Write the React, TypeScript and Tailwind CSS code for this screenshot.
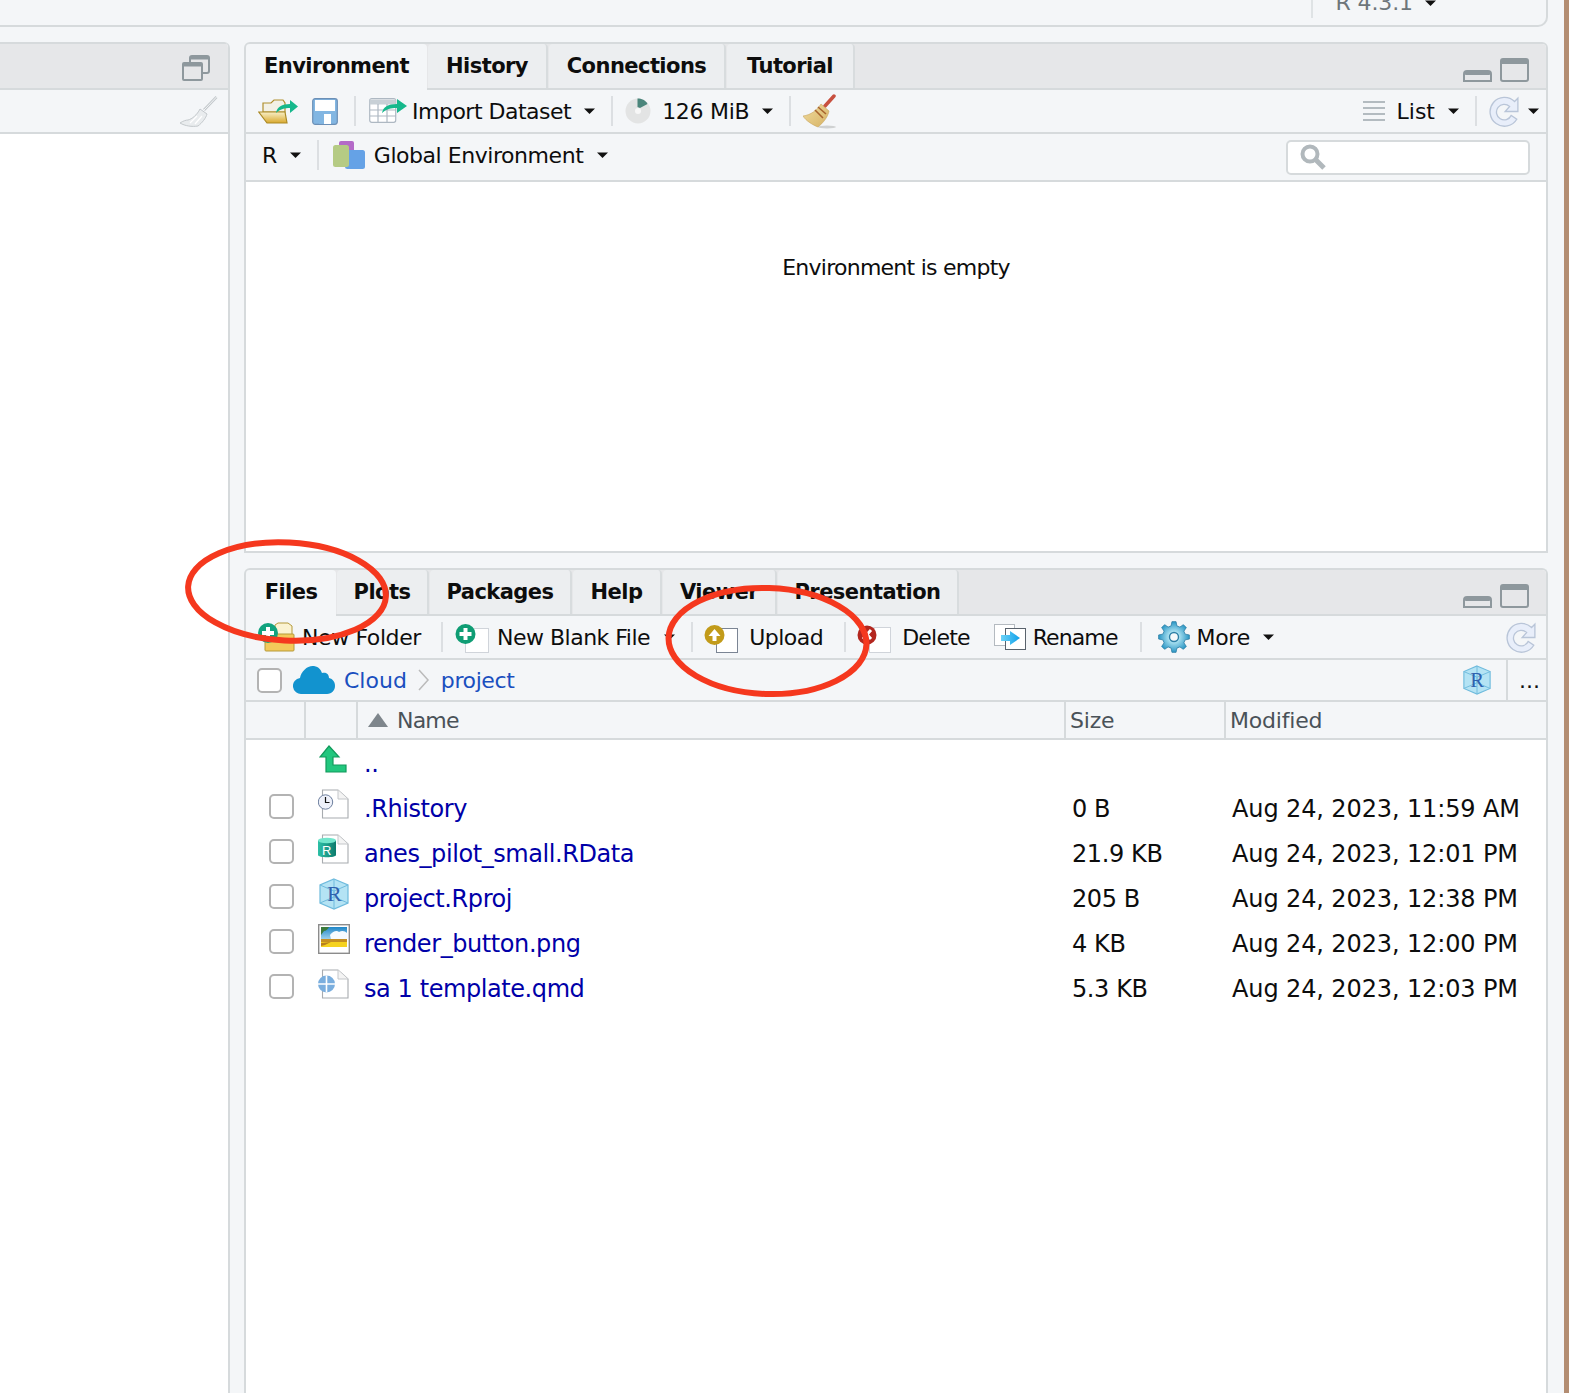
import React from "react";

const Caret = ({ ml = 0 }: { ml?: number }) => (
  <svg width="11" height="6" viewBox="0 0 11 6" className="shrink-0" style={{ marginLeft: ml }}>
    <path d="M0 0.500H11L5.500 6Z" fill="#111" />
  </svg>
);
const Sep = ({ ml, mr }: { ml: number; mr: number }) => (
  <div className="w-[2px] h-[30px] bg-[#dcdfe2] shrink-0" style={{ marginLeft: ml, marginRight: mr }} />
);

const MinIcon = () => (
  <svg width="29" height="12" viewBox="0 0 29 12"><path d="M1 11V4a3 3 0 0 1 3-3h21a3 3 0 0 1 3 3v7" fill="none" stroke="#8e989d" strokeWidth="2"/><rect x="1" y="1" width="27" height="4" rx="2" fill="#8e989d"/><path d="M0 11H29" stroke="#8e989d" strokeWidth="2"/></svg>
);
const MaxIcon = () => (
  <svg width="29" height="24" viewBox="0 0 29 24"><rect x="1" y="1" width="27" height="22" rx="2" fill="none" stroke="#8e989d" strokeWidth="2"/><rect x="1" y="1" width="27" height="5" fill="#8e989d"/></svg>
);
const WinButtons = () => (
  <div className="ml-auto flex items-end gap-[8px] pr-[17px] pb-[6px]"><MinIcon /><MaxIcon /></div>
);

const Folder = () => (
  <svg width="40" height="28" viewBox="0 0 40 28" className="shrink-0">
    <defs><linearGradient id="fo" x1="0" y1="0" x2="0" y2="1"><stop offset="0" stopColor="#f8efc8"/><stop offset="1" stopColor="#d9a92e"/></linearGradient></defs>
    <path d="M5 15V6h8l3-3h9l2 3v9z" fill="#f3f1e6" stroke="#b08f2e" strokeWidth="1.200"/>
    <path d="M0.800 15H27l2 11H9z" fill="url(#fo)" stroke="#ab8a26" strokeWidth="1.200"/>
    <path d="M18 16c1-6 6-9 14-9V3l8 6.500L32 16v-5c-5 0-10 1-14 5z" fill="#16b88c"/>
  </svg>
);
const Save = () => (
  <svg width="26" height="27" viewBox="0 0 26 27" className="shrink-0"><rect x=".7" y=".7" width="24.600" height="25.600" rx="2.500" fill="#82b6e2" stroke="#6b8fb6" strokeWidth="1.200"/><rect x="3" y="2" width="20" height="11" fill="#fff"/><rect x="7" y="16" width="12" height="10" fill="#fff"/><rect x="7" y="16" width="5" height="10" fill="#82b6e2"/></svg>
);
const TableImp = () => (
  <svg width="38" height="26" viewBox="0 0 38 26" className="shrink-0"><rect x=".7" y=".7" width="26" height="23.600" rx="2" fill="#fff" stroke="#aeb8c2" strokeWidth="1.200"/><path d="M.7 1.500h26v5H.7z" fill="#c8d0d6"/><path d="M1 12h26M1 18h26M9 6v18M18 6v18" stroke="#aeb8c2" strokeWidth="1.200"/><path d="M13 15c1-6 6-9 15-9V1l10 7-10 7v-5c-6 0-11 1-15 5z" fill="#16b88c"/></svg>
);
const Pie = () => (
  <svg width="26" height="26" viewBox="0 0 26 26" className="shrink-0"><circle cx="13" cy="13" r="12.500" fill="#e3e4e4"/><path d="M12.500 9V.500c4 0 8 1.500 10 5.500l-7.500 4z" fill="#4b857b"/><circle cx="13" cy="13" r="3" fill="#f7f7f7"/></svg>
);
const Broom = () => (
  <svg width="34" height="35" viewBox="0 0 34 35" className="shrink-0">
    <defs><linearGradient id="br" x1="0" y1="0" x2="1" y2="1"><stop offset="0" stopColor="#f0dca0"/><stop offset="1" stopColor="#d6b263"/></linearGradient></defs>
    <ellipse cx="24" cy="33" rx="9" ry="1.500" fill="#cfd1d2"/>
    <path d="M31 2l-9 10" stroke="#c8503f" strokeWidth="3.500" strokeLinecap="round"/>
    <path d="M18 10l8 7c-1 6-6 12-11 16C10 31 3 27 0 22c8-1 14-6 18-12z" fill="url(#br)" stroke="#c9a660" strokeWidth=".6"/>
    <path d="M15 13l8 7M12 16l8 8" stroke="#a8642e" strokeWidth="1.600"/>
  </svg>
);
const DimBroom = () => (
  <svg width="38" height="31" viewBox="0 0 38 31" className="shrink-0">
    <path d="M36.500 1L24 14" stroke="#c3c8cb" strokeWidth="2.600"/>
    <path d="M36.500 1L24 14" stroke="#f4f6f8" strokeWidth="1"/>
    <path d="M20 13l7 5c-1 4-5 9-9 12-6 1-13 0-18-3 3-2 6-3 8-3 4-1 9-5 12-11z" fill="#e9ecee" stroke="#c3c8cb" strokeWidth="1"/>
    <path d="M10 27l7-7M15 28l7-8" stroke="#fff" strokeWidth="1.200"/>
  </svg>
);
const Lines = () => (
  <svg width="24" height="20" viewBox="0 0 24 20" stroke="#b3bbc0" strokeWidth="2" className="shrink-0"><path d="M1 1h22M1 7h22M1 13h22M1 19h22"/></svg>
);
const Refresh = () => (
  <svg width="31" height="31" viewBox="0 1 28 28" className="shrink-0"><path d="M26 22a13 13 0 1 1-2-16l3-3v12H15.500l4-4.500a7 7 0 1 0 1.500 8z" fill="#e8eefa" stroke="#b9c5d8" strokeWidth="1.200"/></svg>
);
const GlobalEnv = () => (
  <svg width="32" height="28" viewBox="0 0 32 28" className="shrink-0"><rect x="6" y="0" width="15" height="19" rx="2" fill="#b46ac8"/><rect x="12" y="9" width="20" height="19" rx="2.500" fill="#65a2e6"/><rect x="0" y="4" width="16" height="22" rx="2.500" fill="#b5cb84"/></svg>
);
const Search = () => (
  <svg width="27" height="27" viewBox="0 0 27 27" fill="none" stroke="#b1b8bc" className="shrink-0"><circle cx="10" cy="10" r="7.500" strokeWidth="4"/><path d="M15 15l9 9" strokeWidth="5"/></svg>
);
const NewFolder = () => (
  <svg width="38" height="30" viewBox="0 0 38 30" className="shrink-0"><path d="M17 10V3l3-2h10l4 3v24H17z" fill="#fbf3d2" stroke="#b59a3a"/><rect x="7" y="12" width="29" height="17" rx="1" fill="#f3c95a" stroke="#b59a3a"/><circle cx="10" cy="11" r="10" fill="#11a37f"/><path d="M10 5v12M4 11h12" stroke="#fff" strokeWidth="4"/></svg>
);
const NewFile = () => (
  <svg width="36" height="32" viewBox="0 0 36 32" className="shrink-0"><rect x="10.500" y="7.500" width="23" height="24" fill="#fff" stroke="#d0d4da"/><circle cx="10.500" cy="13" r="10" fill="#0f9d74"/><path d="M10.500 7v12M4.500 13h12" stroke="#fff" strokeWidth="4"/></svg>
);
const UploadI = () => (
  <svg width="36" height="32" viewBox="0 0 36 32" className="shrink-0"><rect x="12.500" y="7.500" width="21" height="24" fill="#fff" stroke="#7b8594"/><circle cx="10.500" cy="14" r="10" fill="#c29b1a"/><path d="M10.500 8l6 7h-4v5h-4v-5h-4z" fill="#fff"/></svg>
);
const DeleteI = () => (
  <svg width="36" height="32" viewBox="0 0 36 32" className="shrink-0"><rect x="12.500" y="6.500" width="21" height="25" fill="#fff" stroke="#d0d4da"/><circle cx="10" cy="14" r="9.500" fill="#b3261e"/><path d="M6 9l8 9M14 9l-8 9" stroke="#fff" strokeWidth="3"/></svg>
);
const RenameI = () => (
  <svg width="34" height="28" viewBox="0 0 34 28" className="shrink-0">
    <defs><linearGradient id="rn" x1="0" y1="0" x2="1" y2="0"><stop offset="0" stopColor="#6ed3f7"/><stop offset="1" stopColor="#0ea0ea"/></linearGradient></defs>
    <rect x=".5" y="1.500" width="20" height="21" fill="#fff" stroke="#b4bac0"/><rect x="11.500" y="5.500" width="20" height="21" fill="#fff" stroke="#59626c"/><path d="M7 12h9V8l10 7-10 7v-4H7z" fill="url(#rn)"/>
  </svg>
);
const gearPath = (() => {
  const n = 8, cx = 16, cy = 16, ro = 15.5, ri = 11.5;
  let d = "";
  for (let i = 0; i < n; i++) {
    const a = (i / n) * Math.PI * 2;
    const s = (Math.PI * 2) / n;
    const pts: [number, number][] = [
      [ri, a - s * 0.32],
      [ro, a - s * 0.17],
      [ro, a + s * 0.17],
      [ri, a + s * 0.32],
    ];
    pts.forEach(([r, t], j) => {
      d += `${i === 0 && j === 0 ? "M" : "L"}${(cx + r * Math.cos(t)).toFixed(2)} ${(cy + r * Math.sin(t)).toFixed(2)}`;
    });
  }
  return d + "Z";
})();
const Gear = () => (
  <svg width="32" height="32" viewBox="0 0 32 32" className="shrink-0"><defs><radialGradient id="g1"><stop offset="0.2" stopColor="#c4f0fa"/><stop offset="1" stopColor="#2a96c4"/></radialGradient></defs><path d={gearPath} fill="url(#g1)" stroke="#2d7fa6" strokeWidth=".8"/><circle cx="16" cy="16" r="4.500" fill="#f4f8fa" stroke="#2d7fa6" strokeWidth="1.400"/></svg>
);
const Cloud = () => (
  <svg width="42" height="30" viewBox="0 0 42 30" className="shrink-0"><path d="M9 29a8 8 0 0 1-2-16c1-7 8-13 14-12 5 1 7 4 8 7 3-1 7 0 7 5 4 1 6 4 6 8s-3 8-8 8z" fill="#1293cf"/></svg>
);
const RProj = ({ w = 32 }: { w?: number }) => (
  <svg width={w} height={w} viewBox="0 0 32 32" className="shrink-0"><path d="M16 1l14 6v18l-14 6-14-6V7z" fill="#b4e3f4" stroke="#6fbbdd" strokeWidth="1.200"/><path d="M2 7l14 6 14-6M16 13v18M2 25l14-6 14 6M16 1v18" fill="none" stroke="#6fbbdd" strokeWidth="1"/><text x="16" y="23" textAnchor="middle" fontFamily="'Liberation Serif',serif" fontSize="22" fill="#2f62ae">R</text></svg>
);
const UpArrow = () => (
  <svg width="28" height="28" viewBox="0 0 28 28" className="ml-[1px]"><path d="M10 1l10 11h-6v8h13v7H7V12H1z" fill="#22c77e" stroke="#129a5c" strokeWidth="1.200"/></svg>
);
const FileBase = ({ children }: { children?: React.ReactNode }) => (
  <svg width="32" height="30" viewBox="0 0 32 30"><path d="M4.500 1h15.500l10 9v19H4.500z" fill="#fff" stroke="#a8acb0" strokeWidth="1.100"/><path d="M20 1v9h10" fill="#f4f4f4" stroke="#c4c7ca"/>{children}</svg>
);
const Clock = () => <FileBase><circle cx="7.500" cy="13" r="7.200" fill="#eef1fa" stroke="#6d7f9e"/><path d="M7.500 8v5.500h4" fill="none" stroke="#111" strokeWidth="1.200"/></FileBase>;
const RData = () => (
  <FileBase><defs><linearGradient id="rd" x1="0" y1="0" x2="1" y2="0"><stop offset="0" stopColor="#2cc0a6"/><stop offset="1" stopColor="#0c7a6c"/></linearGradient></defs><path d="M0 7c0-3 18-3 18 0v14c0 3-18 3-18 0z" fill="url(#rd)"/><ellipse cx="9" cy="6.500" rx="9" ry="2.700" fill="#72e6cc"/><text x="8.500" y="21" textAnchor="middle" fontFamily="'Liberation Sans',sans-serif" fontSize="13" fill="#fff">R</text></FileBase>
);
const Png = () => (
  <svg width="32" height="30" viewBox="0 0 32 30">
    <defs><linearGradient id="sk" x1="0" y1="0" x2="0" y2="1"><stop offset="0" stopColor="#1f86c8"/><stop offset="1" stopColor="#a6d6ee"/></linearGradient></defs>
    <rect x=".7" y=".7" width="30.600" height="28.600" fill="#fff" stroke="#8c8c8c" strokeWidth="1.400"/><rect x="3" y="3" width="26" height="13" fill="url(#sk)"/><path d="M12 11c3-4 7-5 9-3 3-2 6-1 8 1v6H13z" fill="#f6fbfe"/><path d="M3 3h8c-1 2-3 4-5 4l-3 4z" fill="#3b7a3c"/><rect x="3" y="15" width="26" height="4" fill="#c58f22"/><path d="M3 18h26v5H3z" fill="#f5d21f"/><path d="M3 19l10-1-6 3-4 1z" fill="#b8801c"/></svg>
);
const Qmd = () => (
  <FileBase><circle cx="8.500" cy="15" r="8.500" fill="#7aaede"/><path d="M8.500 6.500v17M0 15h17" stroke="#fff" strokeWidth="1.600"/></FileBase>
);

const Check = () => <div className="w-[25px] h-[25px] rounded-[5px] border-2 border-[#b3b3b3] bg-white shrink-0" />;

const Tab = ({ label, w, active }: { label: string; w: number; active?: boolean }) => (
  <div
    className={`flex items-center justify-center rounded-t-[4px] text-[21px] font-bold tracking-[-0.55px] text-[#0d0d0d] shrink-0 mr-[1px] ${active ? "h-[46px] -mb-[2px] bg-[#f4f6f8] relative z-10" : "h-[44px] pt-[1px] bg-[#eceef0] border-r-2 border-[#d8dcde]"}`}
    style={{ width: w }}
  >
    {label}
  </div>
);

const files = [
  { name: "..", up: true, icon: <UpArrow />, size: "", mod: "" },
  { name: ".Rhistory", icon: <Clock />, size: "0 B", mod: "Aug 24, 2023, 11:59 AM" },
  { name: "anes_pilot_small.RData", icon: <RData />, size: "21.9 KB", mod: "Aug 24, 2023, 12:01 PM" },
  { name: "project.Rproj", icon: <RProj />, size: "205 B", mod: "Aug 24, 2023, 12:38 PM" },
  { name: "render_button.png", icon: <Png />, size: "4 KB", mod: "Aug 24, 2023, 12:00 PM" },
  { name: "sa 1 template.qmd", icon: <Qmd />, size: "5.3 KB", mod: "Aug 24, 2023, 12:03 PM" },
];

export default function App() {
  return (
    <div className="relative w-[1569px] h-[1393px] overflow-hidden bg-[#f4f6f8] font-['DejaVu_Sans',sans-serif] text-[22px] tracking-[-0.5px] text-[#0d0d0d]">
      {/* top bar */}
      <div className="w-[1548px] h-[27px] border-b-2 border-r-2 border-[#d6dadc] rounded-br-[10px] flex items-start overflow-hidden">
        <div className="ml-auto flex items-center -mt-[14px] pr-[110px]">
          <div className="w-[2px] h-[30px] bg-[#dfe3e5] mr-[22px]" />
          <span className="text-[#6e767b] text-[22px] tracking-[-0.1px]">R 4.3.1</span>
          <Caret ml={12} />
        </div>
      </div>

      <div className="flex pt-[15px] h-[1366px]">
        {/* left pane */}
        <div className="w-[230px] shrink-0 h-full flex flex-col border-r-2 border-[#d6dadc] bg-white rounded-tr-[6px] overflow-hidden">
          <div className="h-[48px] bg-[#e6e7e9] border-t-2 border-b-2 border-[#d6dadc] flex items-center justify-end pr-[18px] pt-[4px] shrink-0">
            <svg width="28" height="26" viewBox="0 0 28 26" fill="none" stroke="#8e989d" strokeWidth="2"><path d="M8 8V3a2 2 0 0 1 2-2h15a2 2 0 0 1 2 2v13a2 2 0 0 1-2 2h-5"/><path d="M8 3h19" strokeWidth="3"/><rect x="1" y="8" width="19" height="17" rx="1"/><path d="M1 10h19" strokeWidth="3"/></svg>
          </div>
          <div className="h-[44px] bg-[#f4f6f8] border-b-2 border-[#d6dadc] flex items-center justify-end pr-[10px] shrink-0">
            <DimBroom />
          </div>
        </div>

        {/* right column */}
        <div className="ml-[14px] w-[1304px] shrink-0 flex flex-col">
          {/* environment */}
          <div className="h-[511px] shrink-0 flex flex-col border-2 border-[#d6dadc] rounded-t-[6px] bg-white overflow-hidden">
            <div className="h-[46px] shrink-0 bg-[#e6e7e9] flex items-end border-b-2 border-[#d6dadc]">
              <Tab label="Environment" w={181} active />
              <Tab label="History" w={120} />
              <Tab label="Connections" w={177} />
              <Tab label="Tutorial" w={128} />
              <WinButtons />
            </div>
            <div className="h-[44px] shrink-0 bg-[#f4f6f8] border-b-2 border-[#d6dadc] flex items-center pl-[12px]">
              <Folder />
              <div className="ml-[14px]"><Save /></div>
              <Sep ml={16} mr={13} />
              <TableImp />
              <span className="ml-[5px]">Import Dataset</span>
              <Caret ml={13} />
              <Sep ml={16} mr={12} />
              <Pie />
              <span className="ml-[11px] tracking-[-0.3px]">126 MiB</span>
              <Caret ml={13} />
              <Sep ml={16} mr={12} />
              <Broom />
              <div className="ml-auto flex items-center pr-[7px]">
                <Lines />
                <span className="ml-[11px] tracking-normal">List</span>
                <Caret ml={13} />
                <Sep ml={16} mr={11} />
                <Refresh />
                <Caret ml={9} />
              </div>
            </div>
            <div className="h-[48px] shrink-0 bg-[#f4f6f8] border-b-2 border-[#d6dadc] flex items-center pl-[16px] pb-[4px]">
              <span>R</span>
              <Caret ml={13} />
              <Sep ml={16} mr={14} />
              <GlobalEnv />
              <span className="ml-[9px] tracking-[-0.45px]">Global Environment</span>
              <Caret ml={14} />
              <div className="ml-auto mr-[16px] mt-[4px] w-[244px] h-[35px] bg-white border-2 border-[#d6dadc] rounded-[5px] flex items-center pl-[12px]">
                <Search />
              </div>
            </div>
            <div className="flex-1 bg-white text-center pt-[72px] leading-[28px] tracking-[-0.75px]">Environment is empty</div>
          </div>

          {/* files */}
          <div className="mt-[15px] flex-1 flex flex-col border-2 border-b-0 border-[#d6dadc] rounded-t-[6px] bg-white overflow-hidden">
            <div className="h-[46px] shrink-0 bg-[#e6e7e9] flex items-end border-b-2 border-[#d6dadc]">
              <Tab label="Files" w={90} active />
              <Tab label="Plots" w={92} />
              <Tab label="Packages" w={142} />
              <Tab label="Help" w={89} />
              <Tab label="Viewer" w={114} />
              <Tab label="Presentation" w={181} />
              <WinButtons />
            </div>
            <div className="h-[44px] shrink-0 bg-[#f4f6f8] border-b-2 border-[#d6dadc] flex items-center pl-[12px]">
              <NewFolder />
              <span className="ml-[6px] tracking-[-0.4px]">New Folder</span>
              <Sep ml={20} mr={12} />
              <NewFile />
              <span className="ml-[6px]">New Blank File</span>
              <Caret ml={14} />
              <Sep ml={16} mr={11} />
              <UploadI />
              <span className="ml-[9px]">Upload</span>
              <Sep ml={21} mr={11} />
              <DeleteI />
              <span className="ml-[9px] tracking-[-0.8px]">Delete</span>
              <div className="ml-[24px]"><RenameI /></div>
              <span className="ml-[5px] tracking-[-0.9px]">Rename</span>
              <Sep ml={22} mr={16} />
              <Gear />
              <span className="ml-[7px] tracking-[-0.3px]">More</span>
              <Caret ml={13} />
              <div className="ml-auto pr-[10px]"><Refresh /></div>
            </div>
            <div className="h-[42px] shrink-0 bg-[#f4f6f8] border-b-2 border-[#d6dadc] flex items-center pl-[11px] text-[#1a4fbf] tracking-normal">
              <Check />
              <div className="ml-[11px]"><Cloud /></div>
              <span className="ml-[9px]">Cloud</span>
              <svg width="12" height="22" viewBox="0 0 12 22" className="ml-[11px]" fill="none" stroke="#bbb" strokeWidth="1.500"><path d="M1 1l9 10-9 10"/></svg>
              <span className="ml-[11px] tracking-[-0.4px]">project</span>
              <div className="ml-auto"><RProj w={30} /></div>
              <div className="ml-[14px] w-[2px] h-full bg-[#d6dadc]" />
              <span className="ml-[11px] mr-[6px] text-[#111]">...</span>
            </div>
            <div className="h-[38px] shrink-0 bg-[#f4f6f8] border-b-2 border-[#d6dadc] flex items-center text-[#4a5258] tracking-normal">
              <div className="w-[60px] h-full border-r-2 border-[#d6dadc] shrink-0" />
              <div className="w-[52px] h-full border-r-2 border-[#d6dadc] shrink-0" />
              <div className="w-[708px] h-full border-r-2 border-[#d6dadc] shrink-0 flex items-center pl-[10px]">
                <svg width="20" height="14" viewBox="0 0 20 14"><path d="M10 0l10 14H0z" fill="#7e868c"/></svg>
                <span className="ml-[9px] tracking-[-0.8px]">Name</span>
              </div>
              <div className="w-[160px] h-full border-r-2 border-[#d6dadc] shrink-0 flex items-center pl-[4px] tracking-[-0.2px]">Size</div>
              <div className="pl-[4px] tracking-[-0.2px]">Modified</div>
            </div>
            <div className="pt-[1px] text-[24px]">
              {files.map((f) => (
                <div key={f.name} className="h-[45px] flex items-center">
                  <div className="w-[72px] shrink-0 pl-[23px] -mt-[5px]">{!f.up && <Check />}</div>
                  <div className="w-[46px] shrink-0 flex items-center -mt-[9px]">{f.icon}</div>
                  <div className="w-[708px] shrink-0 text-[#0000a8] tracking-[-0.42px]">{f.name}</div>
                  <div className="w-[160px] shrink-0 tracking-[-0.4px]">{f.size}</div>
                  <div className="whitespace-nowrap tracking-[-0.12px]">{f.mod}</div>
                </div>
              ))}
            </div>
          </div>
        </div>

        <div className="ml-auto w-[5px] h-[1393px] -mt-[42px] bg-[#b38d72]" />
      </div>

      {/* annotation ellipses */}
      <svg className="absolute inset-0 pointer-events-none" width="1569" height="1393" fill="none" stroke="#f5381e" strokeWidth="6">
        <ellipse cx="287" cy="591.500" rx="99" ry="49" transform="rotate(3 287 591.500)" />
        <ellipse cx="767.500" cy="641" rx="99" ry="53" transform="rotate(2 767.500 641)" />
      </svg>
    </div>
  );
}
